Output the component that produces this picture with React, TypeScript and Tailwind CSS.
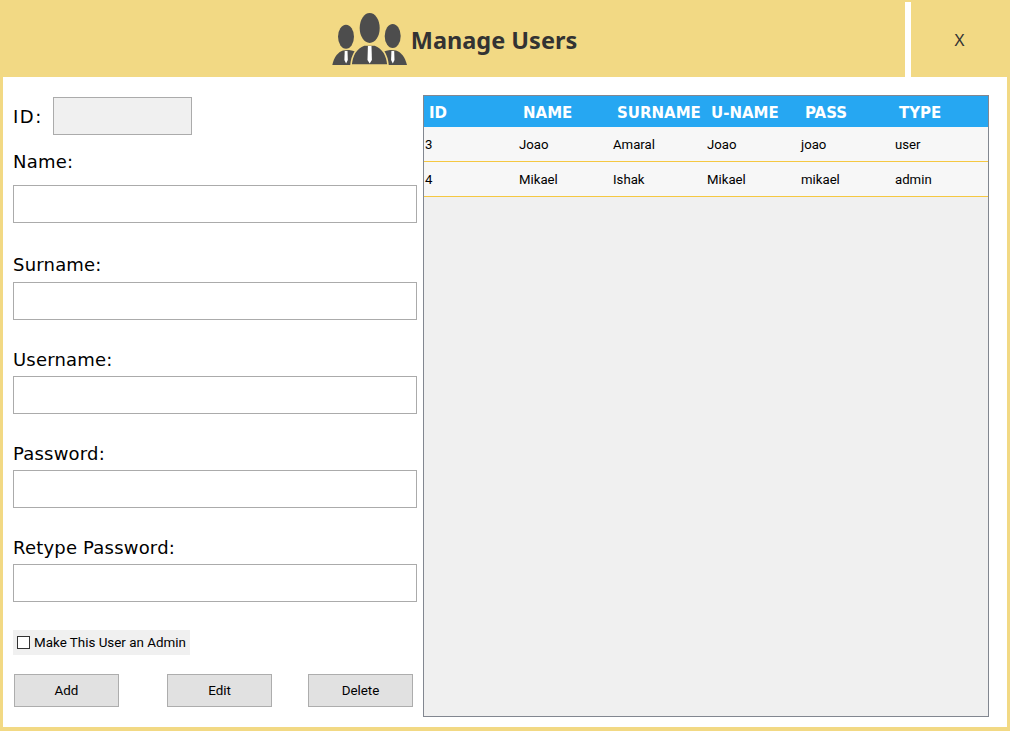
const labelFont = "font-['DejaVu_Sans','Liberation_Sans',sans-serif]";

function UsersIcon() {
  return (
    <svg width="75" height="52" viewBox="0 0 75 52" className="mt-[13px] shrink-0">
      <ellipse cx="14" cy="23.7" rx="8" ry="12" fill="#4d4d4d" />
      <ellipse cx="60.7" cy="23" rx="8" ry="12" fill="#4d4d4d" />
      <path d="M0.3 52 C2 44 6 39 11 37.5 L17 37 C22 38 26 39 29 42 L29 52 Z" fill="#4d4d4d" />
      <path d="M75 52 C73 44 69 39 64 37.5 L58 37 C53 38 49 39 46 42 L46 52 Z" fill="#4d4d4d" />
      <path
        d="M19 52 C20 42 24 35 32 32 L43 32 C51 35 55 42 56 52 Z"
        fill="#4d4d4d"
        stroke="#f2d984"
        strokeWidth="1.6"
      />
      <ellipse cx="37.7" cy="15" rx="10" ry="15" fill="#4d4d4d" />
      <path d="M35.9 33 L39.5 33 L39.9 47 L37.7 50.5 L35.5 47 Z" fill="#fff" />
      <path d="M12.7 38 L15.5 38 L15.8 47 L14.1 50.5 L12.4 47 Z" fill="#fff" />
      <path d="M59.4 38 L62.2 38 L62.5 47 L60.8 50.5 L59.1 47 Z" fill="#fff" />
    </svg>
  );
}

function Field({ label, className }: { label: string; className: string }) {
  return (
    <div className={className}>
      <div className={`h-5 text-[18px] leading-5 text-black tracking-[0.2px] ${labelFont}`}>{label}</div>
      <input className="block w-[404px] h-[38px] border border-[#ababab] bg-white" />
    </div>
  );
}

const users = [
  ["3", "Joao", "Amaral", "Joao", "joao", "user"],
  ["4", "Mikael", "Ishak", "Mikael", "mikael", "admin"],
];

const headers = ["ID", "NAME", "SURNAME", "U-NAME", "PASS", "TYPE"];

export default function App() {
  return (
    <div className="w-[1010px] h-[731px] bg-[#f2d984] overflow-hidden">
      {/* Title bar */}
      <div className="flex h-[77px]">
        <div className="w-[905px] flex justify-center gap-[4px] pl-[4px]">
          <UsersIcon />
          <h1 className="mt-[24px] text-[23.5px] leading-[32px] font-bold text-[#333333] whitespace-nowrap font-['Noto_Sans',sans-serif]">
            Manage Users
          </h1>
        </div>
        <div className="w-[6px] mt-[2px] bg-white" />
        <div className="flex-1 flex items-center justify-center pt-[3px] pr-[2px] text-[17px] text-[#333333] font-['Noto_Sans',sans-serif]">
          X
        </div>
      </div>

      {/* Body */}
      <div className="mx-[3px] h-[650px] bg-white flex">
        {/* Form */}
        <div className="w-[404px] ml-[10px] pt-[20px]">
          <div className="flex items-center h-[38px]">
            <span className={`w-[40px] text-[18px] text-black tracking-[1.5px] ${labelFont}`}>ID:</span>
            <input disabled className="w-[139px] h-[38px] border border-[#ababab] bg-[#f0f0f0]" />
          </div>
          <Field label="Name:" className="mt-[17px] [&>div]:mb-[13px]" />
          <Field label="Surname:" className="mt-[32px] [&>div]:mb-[7px]" />
          <Field label="Username:" className="mt-[30px] [&>div]:mb-[6px]" />
          <Field label="Password:" className="mt-[30px] [&>div]:mb-[6px]" />
          <Field label="Retype Password:" className="mt-[30px] [&>div]:mb-[6px]" />

          <label className="mt-[28px] w-[177px] h-[25px] bg-[#f0f0f0] flex items-center pl-[4px] gap-[4px] text-[13.4px] text-black whitespace-nowrap font-['Roboto',sans-serif]">
            <span className="w-[13px] h-[13px] border border-[#333333] bg-white shrink-0" />
            <span className="pt-[2px]">Make This User an Admin</span>
          </label>

          <div className="mt-[19px] ml-[1px] flex">
            <button className="w-[105px] h-[33px] pt-[2px] bg-[#e1e1e1] border border-[#adadad] text-[13.4px] text-black font-['Roboto',sans-serif]">
              Add
            </button>
            <button className="ml-[48px] w-[105px] h-[33px] pt-[2px] bg-[#e1e1e1] border border-[#adadad] text-[13.4px] text-black font-['Roboto',sans-serif]">
              Edit
            </button>
            <button className="ml-[36px] w-[105px] h-[33px] pt-[2px] bg-[#e1e1e1] border border-[#adadad] text-[13.4px] text-black font-['Roboto',sans-serif]">
              Delete
            </button>
          </div>
        </div>

        {/* Users table */}
        <div className="ml-[6px] mt-[18px] w-[566px] h-[622px] border border-[#828790] bg-[#f0f0f0]">
          <div className="grid grid-cols-6 h-[31px] items-center pt-[3px] bg-[#26a7f2]">
            {headers.map((h) => (
              <div
                key={h}
                className="pl-[5px] text-[15px] font-bold text-white whitespace-nowrap font-['DejaVu_Sans',sans-serif]"
              >
                {h}
              </div>
            ))}
          </div>
          {users.map((row) => (
            <div key={row[0]}>
              <div className="grid grid-cols-6 h-[34px] items-center pt-[2px] bg-[#f7f7f7]">
                {row.map((cell, i) => (
                  <div key={i} className="pl-[1px] text-[13.2px] text-black font-['Roboto',sans-serif]">
                    {cell}
                  </div>
                ))}
              </div>
              <div className="h-px bg-[#f5c842]" />
            </div>
          ))}
        </div>
      </div>
    </div>
  );
}
